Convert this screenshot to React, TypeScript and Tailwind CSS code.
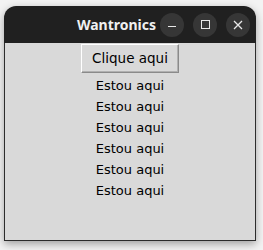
export default function App() {
  const labels = Array.from({ length: 6 }, () => 'Estou aqui')

  return (
    <div className="w-[263px] h-[250px] bg-[#f3f3f3] pl-[4px] pt-[6px]">
      <div className="w-[252px] h-[235px] flex flex-col shadow-[0_3px_8px_rgba(0,0,0,0.35)] rounded-t-[12px]">
        {/* title bar */}
        <div className="h-[37px] shrink-0 bg-[#202020] rounded-t-[12px] flex items-center justify-end pr-[6px] gap-[9px]">
          <span className="mr-[-5px] text-[14px] font-bold text-[#f0f0f0] font-['Noto_Sans',sans-serif]">
            Wantronics
          </span>
          <div className="w-[24px] h-[24px] rounded-full bg-[#363636] flex items-center justify-center">
            <div className="w-[8px] h-[1px] bg-[#e8e8e8] mt-[4px]" />
          </div>
          <div className="w-[24px] h-[24px] rounded-full bg-[#363636] flex items-center justify-center">
            <div className="w-[9px] h-[9px] border border-[#e8e8e8]" />
          </div>
          <div className="w-[24px] h-[24px] rounded-full bg-[#363636] flex items-center justify-center">
            <svg width="10" height="10" viewBox="0 0 10 10">
              <path d="M1 1L9 9M9 1L1 9" stroke="#e8e8e8" strokeWidth="1.3" />
            </svg>
          </div>
        </div>

        {/* body */}
        <div className="flex-1 bg-[#d9d9d9] border-x border-b border-[#2c2c2c] flex flex-col items-center pt-[1px] font-['DejaVu_Sans',sans-serif] text-[13px] text-black">
          <button className="w-[98px] h-[29px] mb-[2px] bg-[#d9d9d9] text-[13.5px] border border-t-white border-l-white border-r-[#8a8a8a] border-b-[#8a8a8a] shadow-[inset_-1px_-1px_0_#b0b0b0]">
            Clique aqui
          </button>
          {labels.map((t, i) => (
            <div key={i} className="h-[21px] leading-[21px]">
              {t}
            </div>
          ))}
        </div>
      </div>
    </div>
  )
}
